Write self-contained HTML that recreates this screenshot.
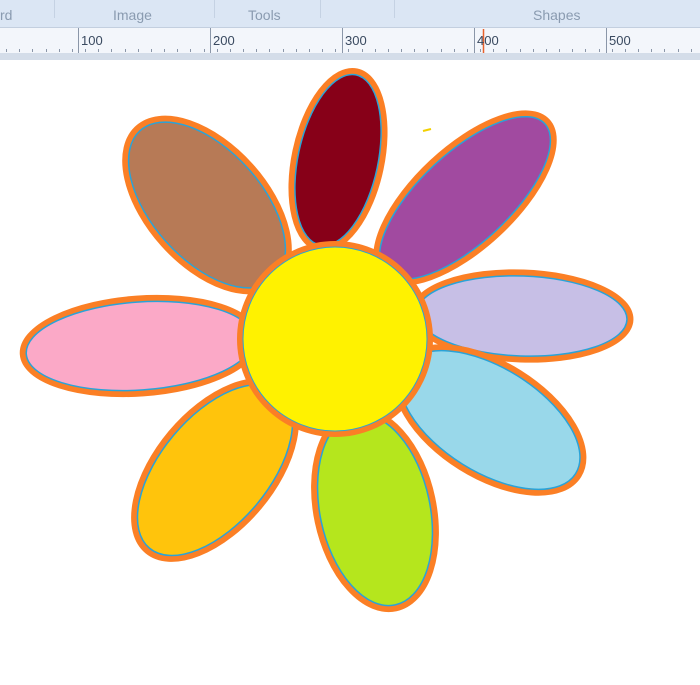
<!DOCTYPE html>
<html><head><style>
body{margin:0;width:700px;height:685px;overflow:hidden;background:#fff;font-family:"Liberation Sans",sans-serif}
.rib{position:absolute;left:0;top:0;width:700px;height:27px;background:#dbe6f4;color:#8a9bb0;font-size:14px}
.rib span{position:absolute;top:7px}
.sep{position:absolute;top:0;width:1px;height:18px;background:#c5d2e3}
.ruler{position:absolute;left:0;top:27px;width:700px;height:25px;background:#f3f6fb;border-top:1px solid #c3cfdf;border-bottom:1px solid #c3cfdf}
.strip{position:absolute;left:0;top:53px;width:700px;height:7px;background:#d4dde9}
</style></head><body>
<div class="rib">
<span style="left:0">rd</span><span style="left:113px">Image</span><span style="left:248px">Tools</span><span style="left:533px">Shapes</span>
<div class="sep" style="left:54px"></div><div class="sep" style="left:214px"></div><div class="sep" style="left:320px"></div><div class="sep" style="left:394px"></div>
</div>
<div class="ruler">
<svg width="700" height="25" style="position:absolute;left:0;top:0">
<g stroke="#8a96a8" stroke-width="1">
<path d="M6.5 21v3M19.5 21v3M32.5 21v3M46.5 21v3M59.5 21v3M72.5 21v3M85.5 21v3M98.5 21v3M111.5 21v3M125.5 21v3M138.5 21v3M151.5 21v3M164.5 21v3M177.5 21v3M190.5 21v3M204.5 21v3M217.5 21v3M230.5 21v3M243.5 21v3M256.5 21v3M269.5 21v3M283.5 21v3M296.5 21v3M309.5 21v3M322.5 21v3M335.5 21v3M348.5 21v3M362.5 21v3M375.5 21v3M388.5 21v3M401.5 21v3M414.5 21v3M427.5 21v3M441.5 21v3M454.5 21v3M467.5 21v3M480.5 21v3M493.5 21v3M506.5 21v3M520.5 21v3M533.5 21v3M546.5 21v3M559.5 21v3M572.5 21v3M585.5 21v3M599.5 21v3M612.5 21v3M625.5 21v3M638.5 21v3M651.5 21v3M664.5 21v3M678.5 21v3M691.5 21v3"/>
<path d="M78.5 0v25M210.5 0v25M342.5 0v25M474.5 0v25M606.5 0v25"/>
</g>
<path d="M483.5 1v24" stroke="#e8602a" stroke-width="1.5"/>
<g fill="#3a4a60" font-size="13" font-family="Liberation Sans,sans-serif">
<text x="81" y="17">100</text><text x="213" y="17">200</text><text x="345" y="17">300</text><text x="477" y="17">400</text><text x="609" y="17">500</text>
</g></svg>
</div>
<div class="strip"></div>
<svg width="700" height="685" style="position:absolute;left:0;top:0">
<g stroke-linejoin="round">
<g transform="translate(338,160) rotate(12)"><ellipse rx="43" ry="90" fill="#fff" stroke="#fb7f25" stroke-width="7"/><ellipse rx="40" ry="87" fill="#870018" stroke="#2aa3d8" stroke-width="1.5"/></g>
<g transform="translate(207,205) rotate(-42)"><ellipse rx="58" ry="103" fill="#fff" stroke="#fb7f25" stroke-width="7"/><ellipse rx="55" ry="100" fill="#b77a56" stroke="#2aa3d8" stroke-width="1.5"/></g>
<g transform="translate(465,198) rotate(47)"><ellipse rx="48" ry="112" fill="#fff" stroke="#fb7f25" stroke-width="7"/><ellipse rx="45" ry="109" fill="#a14aa0" stroke="#2aa3d8" stroke-width="1.5"/></g>
<g transform="translate(522,316) rotate(2)"><ellipse rx="108" ry="43" fill="#fff" stroke="#fb7f25" stroke-width="7"/><ellipse rx="105" ry="40" fill="#c7bfe6" stroke="#2aa3d8" stroke-width="1.5"/></g>
<g transform="translate(140,346) rotate(-4)"><ellipse rx="117" ry="47" fill="#fff" stroke="#fb7f25" stroke-width="7"/><ellipse rx="114" ry="44" fill="#fba9c7" stroke="#2aa3d8" stroke-width="1.5"/></g>
<g transform="translate(490,420) rotate(32)"><ellipse rx="104" ry="55" fill="#fff" stroke="#fb7f25" stroke-width="7"/><ellipse rx="101" ry="52" fill="#99d8ea" stroke="#2aa3d8" stroke-width="1.5"/></g>
<g transform="translate(375,510) rotate(-12)"><ellipse rx="58" ry="100" fill="#fff" stroke="#fb7f25" stroke-width="7"/><ellipse rx="55" ry="97" fill="#b5e61d" stroke="#2aa3d8" stroke-width="1.5"/></g>
<g transform="translate(215,470) rotate(40)"><ellipse rx="57" ry="105" fill="#fff" stroke="#fb7f25" stroke-width="7"/><ellipse rx="54" ry="102" fill="#ffc40c" stroke="#2aa3d8" stroke-width="1.5"/></g>
<circle cx="335" cy="339" r="98" fill="#fb7f25"/>
<circle cx="335" cy="339" r="92" fill="#fff200" stroke="#2aa3d8" stroke-width="1"/>
<path d="M423 131l8-2" stroke="#f2d000" stroke-width="2"/>
</g>
</svg>
</body></html>
